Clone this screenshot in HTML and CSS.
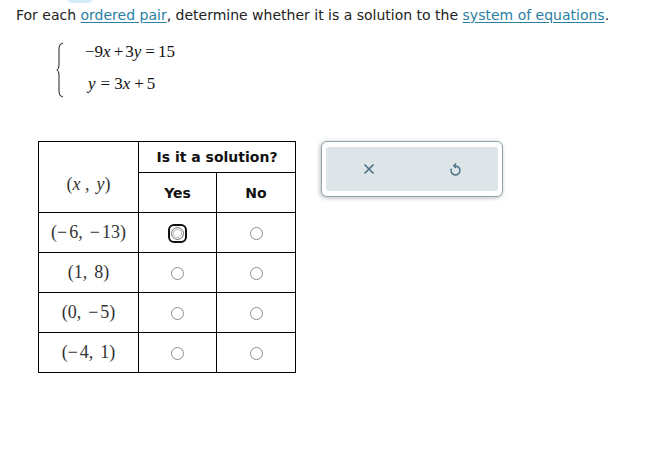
FILE: index.html
```html
<!DOCTYPE html>
<html>
<head>
<meta charset="utf-8">
<link rel="stylesheet" href="styles.css">
</head>
<body>
<div class="page">
  <div class="tab"></div>
  <p class="prompt">For each <a class="term" href="#">ordered pair</a>, determine whether it is a solution to the <a class="term" href="#">system of equations</a>.</p>

  <div class="system">
    <svg class="brace" width="8" height="56" viewBox="0 0 8 56">
      <path d="M7 1 Q3 1.5 3 6 L3 23 Q3 27.5 0.8 28 Q3 28.5 3 33 L3 50 Q3 54.5 7 55" fill="none" stroke="#222" stroke-width="1"/>
    </svg>
    <div class="eqs">
      <div class="eq"><span class="neg">−</span>9<i>x</i><span class="bin">+</span>3<i>y</i><span class="rel">=</span>15</div>
      <div class="eq eq2"><i>y</i><span class="rel">=</span>3<i>x</i><span class="bin">+</span>5</div>
    </div>
  </div>

  <div class="work">
    <table class="grid">
      <colgroup><col class="c1"><col class="c2"><col class="c3"></colgroup>
      <tr class="h1">
        <td rowspan="2" class="math pair-head">(<i>x</i> <span class="cm">,</span><i>y</i>)</td>
        <th colspan="2">Is it a solution?</th>
      </tr>
      <tr class="h2"><th>Yes</th><th>No</th></tr>
      <tr>
        <td class="math">(<span class="neg">−</span>6<span class="cm">,</span><span class="neg">−</span>13)</td>
        <td><span class="focus"><span class="radio"></span></span></td>
        <td><span class="radio"></span></td>
      </tr>
      <tr>
        <td class="math">(1<span class="cm">,</span>8)</td>
        <td><span class="radio"></span></td>
        <td><span class="radio"></span></td>
      </tr>
      <tr>
        <td class="math">(0<span class="cm">,</span><span class="neg">−</span>5)</td>
        <td><span class="radio"></span></td>
        <td><span class="radio"></span></td>
      </tr>
      <tr>
        <td class="math">(<span class="neg">−</span>4<span class="cm">,</span>1)</td>
        <td><span class="radio"></span></td>
        <td><span class="radio"></span></td>
      </tr>
    </table>

    <div class="controls">
      <div class="controls-inner">
        <button class="icon-btn" aria-label="clear">
          <svg width="12" height="12" viewBox="0 0 12 12"><path d="M1.5 1.5 L10.5 10.5 M10.5 1.5 L1.5 10.5" stroke="#4d7080" stroke-width="1.6" fill="none"/></svg>
        </button>
        <button class="icon-btn" aria-label="undo">
          <svg width="12" height="15" viewBox="0 0 12 15"><path d="M2.4 6.6 A4.5 4.5 0 1 0 6.2 4" stroke="#4d7080" stroke-width="1.5" fill="none"/><path d="M7 1.6 L4.9 3.9 L7.2 5.9" stroke="#4d7080" stroke-width="1.5" fill="none"/></svg>
        </button>
      </div>
    </div>
  </div>
</div>
</body>
</html>
```

FILE: styles.css
```css
html, body {
  margin: 0;
  padding: 0;
  background: #ffffff;
}

.page {
  position: relative;
  font-family: "DejaVu Sans", Verdana, sans-serif;
  color: #222;
}

.tab {
  position: absolute;
  left: 67px;
  top: -8px;
  width: 26px;
  height: 11px;
  border-radius: 6px;
  background: #d3ecf3;
}

.prompt {
  margin: 0;
  padding: 7px 0 0 16px;
  font-size: 14px;
  line-height: 16px;
  color: #222;
}

.term {
  color: #2a7fa3;
  text-decoration: underline;
  text-underline-offset: 2px;
}

.system {
  display: flex;
  align-items: flex-start;
  margin: 19px 0 0 56px;
}

.brace {
  display: block;
}

.eqs {
  display: flex;
  flex-direction: column;
  align-items: flex-start;
  gap: 12px;
  margin-left: 21px;
  font-family: "Liberation Serif", "Times New Roman", serif;
  font-size: 17px;
  color: #111;
}

.eq {
  line-height: 20px;
  white-space: nowrap;
}

.eq2 {
  padding-left: 3px;
}

.eq i {
  padding-right: 1px;
}

.bin {
  padding: 0 2px;
}

.rel {
  padding: 0 3px;
}

.eq2 .bin {
  padding: 0 3px;
}

.eq2 .rel {
  padding: 0 4px;
}

.work {
  display: flex;
  align-items: flex-start;
  margin: 43px 0 0 38px;
}

.grid {
  border-collapse: collapse;
  width: 258px;
  table-layout: fixed;
}

.c1 { width: 100px; }
.c2 { width: 78px; }
.c3 { width: 79px; }

.grid td, .grid th {
  border: 1px solid #000;
  text-align: center;
  vertical-align: middle;
  padding: 0;
  height: 39px;
}

.grid .h1 th {
  height: 30px;
  font-size: 14px;
  font-weight: bold;
  color: #111;
}

.grid .h2 th {
  font-size: 14px;
  font-weight: bold;
  color: #111;
}

.math {
  font-family: "Liberation Serif", "Times New Roman", serif;
  font-size: 18px;
  color: #333;
  white-space: nowrap;
}

.pair-head {
  padding-top: 14px !important;
}

.math .neg {
  padding-right: 2px;
}

.cm {
  padding-right: 7px;
}

.radio {
  display: inline-block;
  width: 11px;
  height: 11px;
  border: 1px solid #8c8c8c;
  border-radius: 50%;
  vertical-align: middle;
  box-sizing: content-box;
}

.focus {
  display: inline-flex;
  align-items: center;
  justify-content: center;
  width: 15px;
  height: 15px;
  border: 2px solid #111;
  border-radius: 6px;
  vertical-align: middle;
}

.focus .radio {
  width: 11px;
  height: 11px;
  border-color: #777;
  box-shadow: inset 0 0 0 1px #fff, inset 0 0 0 2px #bbb;
}

.controls {
  box-sizing: border-box;
  margin-left: 25px;
  width: 182px;
  height: 56px;
  border: 1px solid #8ea5ae;
  border-radius: 6px;
  background: #fff;
  box-shadow: -1px 1px 4px rgba(0, 0, 0, 0.28);
  padding: 5px 4px;
}

.controls-inner {
  display: flex;
  justify-content: space-around;
  align-items: center;
  height: 44px;
  background: #dde5e8;
  border-radius: 3px;
}

.icon-btn {
  display: flex;
  align-items: center;
  justify-content: center;
  width: 40px;
  height: 30px;
  border: 0;
  padding: 0;
  background: transparent;
}
```
